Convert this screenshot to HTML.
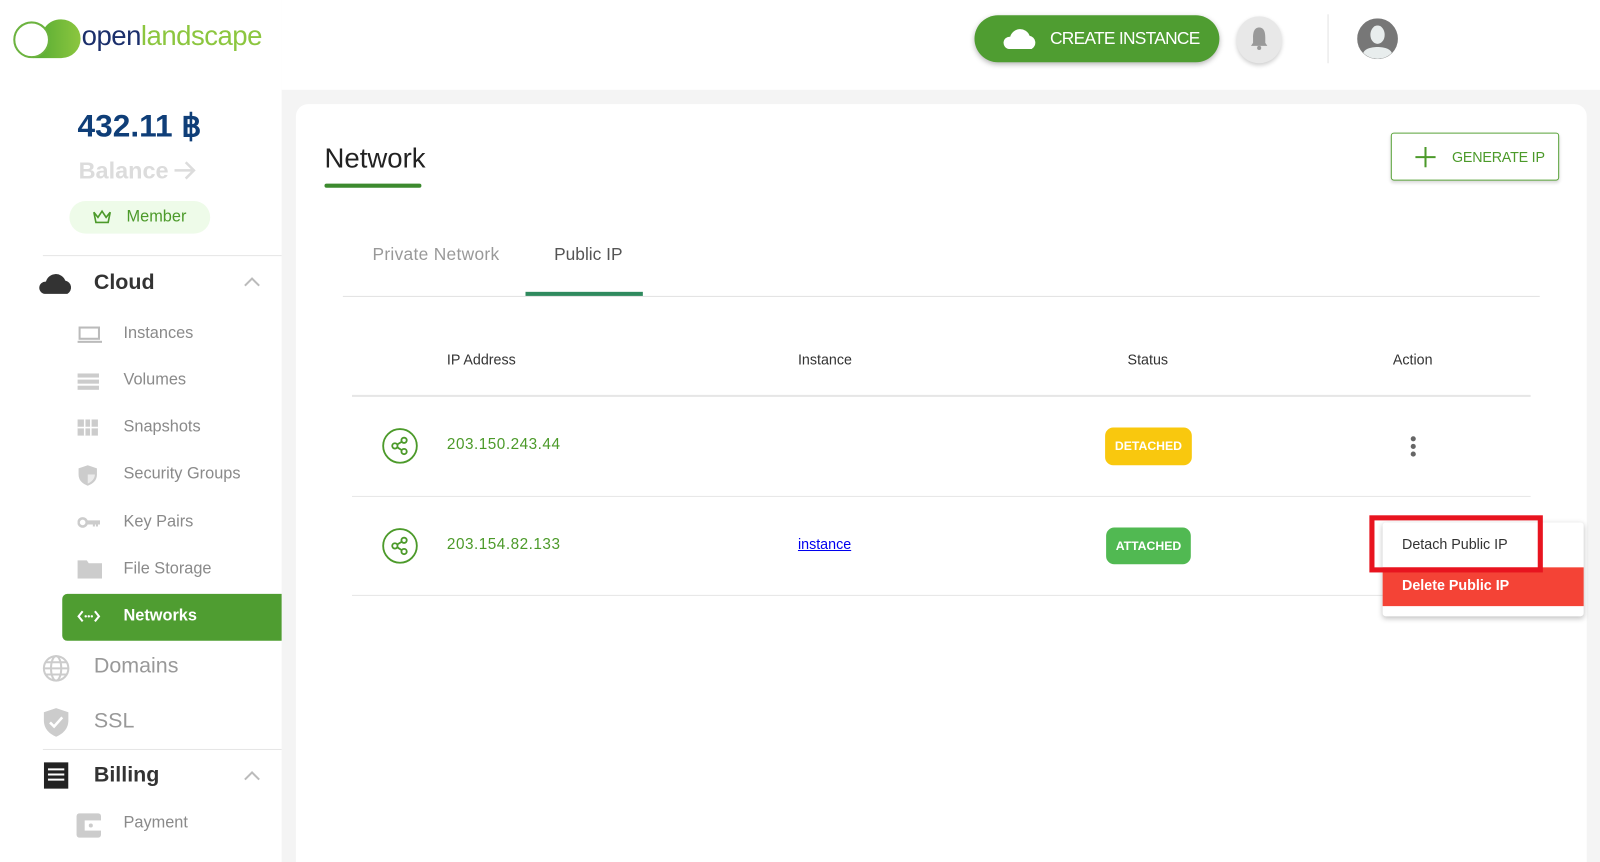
<!DOCTYPE html>
<html><head><meta charset="utf-8"><style>
*{margin:0;padding:0;box-sizing:border-box}
html,body{width:1600px;height:862px;overflow:hidden}
body{background:#f4f4f4;font-family:"Liberation Sans",sans-serif;position:relative}
#w{position:absolute;left:0;top:0;width:1568px;height:845px;transform:scale(1.0204);transform-origin:0 0;overflow:hidden}
.abs{position:absolute}
.side{left:0;top:0;width:276px;height:845px;background:#fff}
.top{left:276px;top:0;width:1292px;height:88px;background:#fff}
.card{left:290px;top:102px;width:1265px;height:780px;background:#fff;border-radius:12px}
.nav{position:absolute;left:121px;font-size:16px;color:#8a8a8a}
.ic{position:absolute;left:76px}
.th{position:absolute;top:344px;font-size:14px;color:#333}
</style></head><body><div id="w">
<div class="abs side"></div>
<div class="abs top"></div>
<div class="abs card"></div>

<svg class="abs" style="left:10px;top:17px" width="70" height="42" viewBox="0 0 70 42">
<defs><linearGradient id="g" x1="0" x2="1"><stop offset="0" stop-color="#4fa832"/><stop offset="1" stop-color="#8cc63f"/></linearGradient></defs>
<path d="M22 40 L50 40 A19 19 0 0 0 50 2 A19 19 0 0 0 34 10 A19 19 0 0 0 22 40Z" fill="url(#g)"/>
<circle cx="21" cy="22" r="17" fill="#fff" stroke="#6cb33f" stroke-width="2"/>
</svg>
<div class="abs" style="left:80px;top:20px;font-size:27px;letter-spacing:-0.5px;color:#8cc63f"><span style="color:#1b2f6b">open</span>landscape</div>

<div class="abs" style="left:76px;top:106px;font-size:31px;font-weight:bold;color:#0f3e78">432.11 ฿</div>
<div class="abs" style="left:77px;top:154px;font-size:23px;font-weight:bold;color:#dcdcdc">Balance</div>
<svg class="abs" style="left:170px;top:157px" width="22" height="20"><path d="M1 10H20M12 2L20 10L12 18" stroke="#dcdcdc" stroke-width="2.5" fill="none"/></svg>
<div class="abs" style="left:68px;top:197px;width:138px;height:32px;border-radius:16px;background:#eefbe9"></div>
<svg class="abs" style="left:90px;top:205px" width="20" height="15" viewBox="0 0 20 15"><path d="M2 3 L6 8 L10 2 L14 8 L18 3 L16 13 L4 13Z" fill="none" stroke="#4c9a2a" stroke-width="1.6"/></svg>
<div class="abs" style="left:124px;top:204px;font-size:16px;color:#4c9a2a">Member</div>

<div class="abs" style="left:42px;top:250px;width:234px;height:1px;background:#e6e6e6"></div>
<svg class="abs" style="left:38px;top:266px" width="34" height="24" viewBox="0 0 34 24"><path d="M6 22 A6 6 0 0 1 7 10 A10 10 0 0 1 26 9 A7 7 0 0 1 28 22Z" fill="#333"/></svg>
<div class="abs" style="left:92px;top:265px;font-size:21px;font-weight:bold;color:#333">Cloud</div>
<svg class="abs" style="left:238px;top:271px" width="18" height="11"><path d="M2 9L9 2L16 9" stroke="#bbb" stroke-width="2" fill="none"/></svg>

<svg class="ic" style="top:319px" width="24" height="18"><rect x="2" y="2" width="19" height="11" fill="none" stroke="#bbb" stroke-width="2"/><rect x="0" y="15" width="24" height="2" fill="#bbb"/></svg>
<div class="nav" style="top:318px">Instances</div>
<svg class="ic" style="top:365px" width="22" height="18"><rect y="1" width="21" height="4" fill="#ccc"/><rect y="7" width="21" height="4" fill="#ccc"/><rect y="13" width="21" height="4" fill="#ccc"/></svg>
<div class="nav" style="top:364px">Volumes</div>
<svg class="ic" style="top:411px" width="20" height="16"><rect width="20" height="16" fill="#ccc"/><path d="M7 0V16M13 0V16M0 8H20" stroke="#fff" stroke-width="1.5"/></svg>
<div class="nav" style="top:410px">Snapshots</div>
<svg class="ic" style="top:455px" width="20" height="22"><path d="M10 1 L19 4 V10 C19 16 15 19 10 21 C5 19 1 16 1 10 V4Z" fill="#ccc"/><path d="M10 3 V19 C14 17 17 14 17 10 H10Z" fill="#fff" opacity=".6"/></svg>
<div class="nav" style="top:456px">Security Groups</div>
<svg class="ic" style="top:505px" width="22" height="14"><circle cx="5" cy="7" r="4" fill="none" stroke="#ccc" stroke-width="2.5"/><path d="M9 6H21V8H9Z M16 8V11 M19 8V11" stroke="#ccc" stroke-width="2" fill="#ccc"/></svg>
<div class="nav" style="top:503px">Key Pairs</div>
<svg class="ic" style="top:549px" width="24" height="18"><path d="M0 0H9L11 3H24V18H0Z" fill="#ccc"/></svg>
<div class="nav" style="top:549px">File Storage</div>

<div class="abs" style="left:61px;top:582px;width:215px;height:46px;background:#4f9d31;border-radius:5px 0 0 5px"></div>
<svg class="abs" style="left:75px;top:597px" width="24" height="14"><path d="M6 2L2 7L6 12M18 2L22 7L18 12" stroke="#fff" stroke-width="2" fill="none"/><circle cx="9" cy="7" r="1.2" fill="#fff"/><circle cx="12" cy="7" r="1.2" fill="#fff"/><circle cx="15" cy="7" r="1.2" fill="#fff"/></svg>
<div class="abs" style="left:121px;top:595px;font-size:16px;font-weight:bold;color:#fff">Networks</div>

<svg class="abs" style="left:41px;top:641px" width="28" height="28" viewBox="0 0 28 28" fill="none" stroke="#ccc" stroke-width="2"><circle cx="14" cy="14" r="12"/><ellipse cx="14" cy="14" rx="5" ry="12"/><path d="M2 14H26M4 8H24M4 20H24"/></svg>
<div class="abs" style="left:92px;top:641px;font-size:21px;color:#999">Domains</div>
<svg class="abs" style="left:42px;top:693px" width="26" height="30" viewBox="0 0 26 30"><path d="M13 1 L25 5 V13 C25 21 20 26 13 29 C6 26 1 21 1 13 V5Z" fill="#ccc"/><path d="M7 15 L11 19 L19 10" stroke="#fff" stroke-width="2.5" fill="none"/></svg>
<div class="abs" style="left:92px;top:695px;font-size:21px;color:#999">SSL</div>
<div class="abs" style="left:42px;top:734px;width:234px;height:1px;background:#e6e6e6"></div>
<svg class="abs" style="left:43px;top:747px" width="24" height="26"><rect width="24" height="26" fill="#222"/><path d="M4 7H20M4 12H20M4 17H20" stroke="#fff" stroke-width="2"/></svg>
<div class="abs" style="left:92px;top:748px;font-size:21px;font-weight:bold;color:#333">Billing</div>
<svg class="abs" style="left:238px;top:755px" width="18" height="11"><path d="M2 9L9 2L16 9" stroke="#bbb" stroke-width="2" fill="none"/></svg>
<svg class="ic" style="top:797px;left:75px" width="24" height="24"><rect width="24" height="24" rx="3" fill="#ccc"/><rect x="8" y="7" width="16" height="10" fill="#fff"/><circle cx="14" cy="12" r="2" fill="#ccc"/></svg>
<div class="nav" style="top:798px">Payment</div>

<div class="abs" style="left:955px;top:15px;width:240px;height:46px;border-radius:23px;background:#4f9d31;box-shadow:0 2px 5px rgba(0,0,0,.3)"></div>
<svg class="abs" style="left:983px;top:26px" width="32" height="24"><path d="M6 22 A6 6 0 0 1 7 10 A10 10 0 0 1 26 9 A7 7 0 0 1 28 22Z" fill="#fff"/></svg>
<div class="abs" style="left:1029px;top:28px;font-size:17px;color:#fff;letter-spacing:-0.7px">CREATE INSTANCE</div>
<div class="abs" style="left:1212px;top:16px;width:44px;height:46px;border-radius:22px;background:#e8e8e8;box-shadow:0 2px 4px rgba(0,0,0,.2)"></div>
<svg class="abs" style="left:1224px;top:25px" width="20" height="26"><path d="M10 2 C5 2 4 7 4 12 V17 L2 20 H18 L16 17 V12 C16 7 15 2 10 2Z" fill="#999"/><circle cx="10" cy="22" r="2" fill="#999"/></svg>
<div class="abs" style="left:1301px;top:14px;width:1px;height:48px;background:#e2e2e2"></div>
<svg class="abs" style="left:1330px;top:18px" width="40" height="40"><circle cx="20" cy="20" r="20" fill="#777"/><ellipse cx="20" cy="16" rx="7" ry="9" fill="#e8eded"/><path d="M6 34 C8 26 32 26 34 34 A20 20 0 0 1 6 34Z" fill="#e8eded"/></svg>

<div class="abs" style="left:318px;top:140px;font-size:27px;color:#222">Network</div>
<div class="abs" style="left:318px;top:180px;width:95px;height:4px;background:#3c8a2e;border-radius:2px"></div>
<div class="abs" style="left:1363px;top:130px;width:165px;height:47px;border:1px solid #5aa33a;border-radius:3px;background:#fff;box-shadow:0 2px 3px rgba(0,0,0,.15)"></div>
<svg class="abs" style="left:1387px;top:144px" width="20" height="20"><path d="M10 0V20M0 10H20" stroke="#4c9a2a" stroke-width="2"/></svg>
<div class="abs" style="left:1423px;top:146px;font-size:14px;color:#4c9a2a;letter-spacing:-0.2px">GENERATE IP</div>

<div class="abs" style="left:365px;top:240px;font-size:17px;color:#999;letter-spacing:.3px">Private Network</div>
<div class="abs" style="left:543px;top:240px;font-size:17px;color:#555">Public IP</div>
<div class="abs" style="left:336px;top:290px;width:1173px;height:1px;background:#e2e2e2"></div>
<div class="abs" style="left:515px;top:286px;width:115px;height:4px;background:#2f8a5e"></div>

<div class="th" style="left:438px">IP Address</div>
<div class="th" style="left:782px">Instance</div>
<div class="th" style="left:1105px">Status</div>
<div class="th" style="left:1365px">Action</div>
<div class="abs" style="left:345px;top:387px;width:1155px;height:2px;background:#e6e6e6"></div>
<div class="abs" style="left:345px;top:486px;width:1155px;height:1px;background:#e6e6e6"></div>
<div class="abs" style="left:345px;top:583px;width:1010px;height:1px;background:#e6e6e6"></div>

<svg class="abs" style="left:374px;top:419px" width="36" height="36" viewBox="0 0 36 36" fill="none" stroke="#4c9a2a" stroke-width="1.8"><circle cx="18" cy="18" r="16.5"/><circle cx="13" cy="18" r="2.6"/><circle cx="22" cy="12.5" r="2.6"/><circle cx="22" cy="23.5" r="2.6"/><path d="M15.3 16.6L19.7 13.9M15.3 19.4L19.7 22.1"/></svg>
<div class="abs" style="left:438px;top:427px;font-size:15px;color:#4c9a2a;letter-spacing:.5px">203.150.243.44</div>
<svg class="abs" style="left:374px;top:517px" width="36" height="36" viewBox="0 0 36 36" fill="none" stroke="#4c9a2a" stroke-width="1.8"><circle cx="18" cy="18" r="16.5"/><circle cx="13" cy="18" r="2.6"/><circle cx="22" cy="12.5" r="2.6"/><circle cx="22" cy="23.5" r="2.6"/><path d="M15.3 16.6L19.7 13.9M15.3 19.4L19.7 22.1"/></svg>
<div class="abs" style="left:438px;top:525px;font-size:15px;color:#4c9a2a;letter-spacing:.5px">203.154.82.133</div>
<div class="abs" style="left:782px;top:525px;font-size:14px;color:#00e;text-decoration:underline">instance</div>

<div class="abs" style="left:1083px;top:419px;width:85px;height:37px;border-radius:8px;background:#f9c80e;color:#fff;font-size:12px;font-weight:bold;text-align:center;line-height:37px">DETACHED</div>
<div class="abs" style="left:1084px;top:517px;width:83px;height:36px;border-radius:8px;background:#51b952;color:#fff;font-size:12px;font-weight:bold;text-align:center;line-height:36px">ATTACHED</div>
<svg class="abs" style="left:1381px;top:427px" width="8" height="22"><circle cx="4" cy="3" r="2.5" fill="#666"/><circle cx="4" cy="10.5" r="2.5" fill="#666"/><circle cx="4" cy="18" r="2.5" fill="#666"/></svg>

<div class="abs" style="left:1355px;top:512px;width:197px;height:92px;background:#fff;box-shadow:0 2px 5px rgba(0,0,0,.25);border-radius:3px"></div>
<div class="abs" style="left:1355px;top:556px;width:197px;height:38px;background:#f44336"></div>
<div class="abs" style="left:1374px;top:565px;font-size:14px;font-weight:bold;color:#fff">Delete Public IP</div>
<div class="abs" style="left:1342px;top:505px;width:170px;height:56px;border:5px solid #e8141f"></div>
<div class="abs" style="left:1374px;top:525px;font-size:14px;color:#333">Detach Public IP</div>
</div></body></html>
